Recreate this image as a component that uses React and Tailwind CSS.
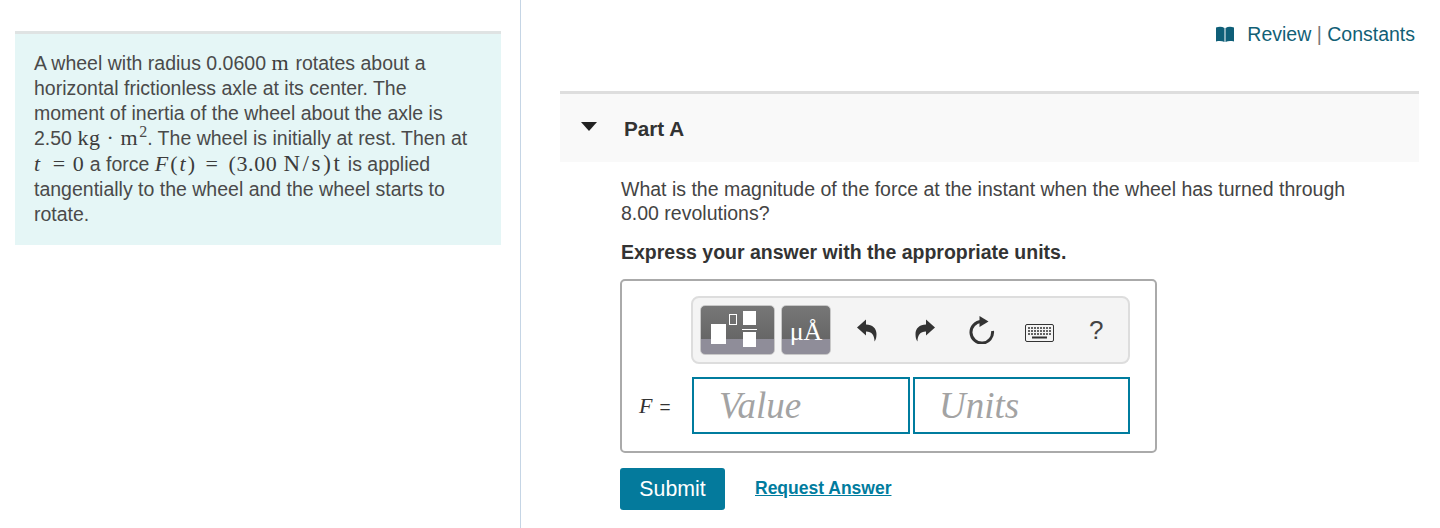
const M = ({ children, i, className = "" }) => (
  <span className={`font-['Liberation_Serif',serif] text-[22px] leading-[0] tracking-[0.6px] text-[#3c3c3c] ${i ? "italic" : ""} ${className}`}>{children}</span>
);

const Undo = ({ flip }) => (
  <svg width="20" height="23" viewBox="0 0 20 23" className={flip ? "-scale-x-100" : ""}>
    <path d="M0 8.500 L9 0.500 V5.500 C15.500 5.500 19.500 9.500 19.500 15 C19.500 18 19 20.500 17.500 22.500 C17.500 16.500 15 12.500 9 12.500 V16.500 Z" fill="#333" />
  </svg>
);

export default function App() {
  return (
    <div className="flex h-[528px] w-[1440px] overflow-hidden bg-white font-['Liberation_Sans',sans-serif] text-[19.5px] text-[#4a4a4a]">
      <div className="h-full w-[521px] shrink-0 border-r border-[#c5d5e5] pl-[15px] pr-[19px] pt-[31px]">
        <div className="h-[214px] border-t-[3px] border-[#dfe3e3] bg-[#e5f6f6] pb-[18px] pl-[19px] pr-[20px] pt-[17px] leading-[25.15px]">
          <p>
            A wheel with radius 0.0600 <M className="tracking-[1.5px]">m</M> rotates about a<br />
            horizontal frictionless axle at its center. The<br />
            moment of inertia of the wheel about the axle is<br />
            2.50 <M>kg</M><M className="mx-[6px]">·</M><M className="tracking-[1.5px]">m</M><sup className="text-[16px] leading-[0] font-['Liberation_Serif',serif]">2</sup>. The wheel is initially at rest. Then at<br />
            <M i>t</M><M className="ml-[12px]">=</M><M className="ml-[7px]">0</M> a force <M i className="tracking-[2px]">F</M><M className="tracking-[2px]">(</M><M i className="tracking-[2px]">t</M><M className="tracking-[1.5px]">)</M><M className="ml-[9px]">=</M><M className="ml-[10px]">(3.00</M><M className="ml-[6px] text-[23px] tracking-[2.6px]">N/s)t</M> is applied<br />
            tangentially to the wheel and the wheel starts to<br />
            rotate.
          </p>
        </div>
      </div>

      <div className="flex-1 pl-[39px] pr-[21px]">
        <div className="flex h-[91px] items-start justify-end pr-1 pt-[20px] text-[#125f76]">
          <svg width="18" height="16" viewBox="0 0 18 16" className="mr-[13px] mt-[6px]">
            <path d="M0 1.500 C3 0.500 6 0.500 8.500 2 V16 C6 14.800 3 14.800 0 15.500 Z M18 1.500 C15 0.500 12 0.500 9.500 2 V16 C12 14.800 15 14.800 18 15.500 Z" fill="#0f5f78" />
          </svg>
          <span>Review <span className="text-[#777]">|</span> Constants</span>
        </div>

        <div className="flex h-[71px] items-center border-t-[3px] border-[#dedede] bg-[#f9f9f9] pl-[21px]">
          <svg width="16" height="9" viewBox="0 0 16 9" className="mt-[-3px]">
            <path d="M0 0 H16 L8 9 Z" fill="#222" />
          </svg>
          <span className="ml-[27px] mt-[2px] text-[20.7px] font-bold text-[#333]">Part A</span>
        </div>

        <div className="pl-[61px] pt-[15px]">
          <p className="w-[760px] leading-[24px] text-[#444]">
            What is the magnitude of the force at the instant when the wheel has turned through 8.00 revolutions?
          </p>
          <p className="mt-[15px] font-bold leading-[24px] text-[#333]">Express your answer with the appropriate units.</p>

          <div className="ml-[-1px] mt-[15px] h-[174px] w-[537px] rounded-[5px] border-2 border-[#aaa] pl-[69px] pr-[25px] pt-[15px]">
            <div className="flex h-[68px] w-[439px] items-center rounded-[8px] border-2 border-[#ddd] bg-[#f4f4f4] pl-[7px]">
              <div className="relative h-[50px] w-[75px] shrink-0 overflow-hidden rounded-[5px] border border-[#c8c8c8] bg-[linear-gradient(#777_0,#666_33px,#8f8d99_33px)]">
                <div className="absolute left-[10px] top-[18px] h-[20px] w-[15px] bg-white" />
                <div className="absolute left-[28px] top-[8px] h-[11px] w-[8px] border border-white" />
                <div className="absolute left-[42px] top-[5px] h-[14px] w-[13px] bg-white" />
                <div className="absolute left-[41px] top-[23px] h-[1px] w-[15px] bg-white" />
                <div className="absolute left-[42px] top-[26px] h-[15px] w-[13px] bg-white" />
              </div>
              <div className="relative ml-[6px] flex h-[50px] w-[50px] shrink-0 items-end justify-center overflow-hidden rounded-[5px] border border-[#c8c8c8] bg-[linear-gradient(#777_0,#666_33px,#8f8d99_33px)] pb-[9px] font-['Liberation_Serif',serif] text-[26px] leading-[26px] text-white">
                μÅ
              </div>
              <div className="ml-[26px] flex h-[24px] w-[20px] shrink-0 items-center"><Undo /></div>
              <div className="ml-[38px] flex h-[24px] w-[20px] shrink-0 items-center"><Undo flip /></div>
              <svg width="27" height="28" viewBox="0 0 27 28" className="ml-[33px] shrink-0">
                <path d="M13.500 5.500 A10.800 10.800 0 1 0 24.500 15" fill="none" stroke="#333" strokeWidth="3" />
                <path d="M11.500 0 L20.500 5.500 L11.500 11 Z" fill="#333" />
              </svg>
              <svg width="29" height="18" viewBox="0 0 29 18" className="ml-[30px] mt-[5px] shrink-0">
                <rect x="0.500" y="0.500" width="28" height="17" rx="1.500" fill="#f4f4f4" stroke="#333" />
                <path d="M3 4 H26 M3 7 H26 M3 10 H26" stroke="#333" strokeWidth="1.500" strokeDasharray="2 1" />
                <path d="M7 13.500 H22" stroke="#333" strokeWidth="2" />
              </svg>
              <span className="ml-[35px] text-[26px] leading-none text-[#444]">?</span>
            </div>

            <div className="ml-[-53px] mt-[13px] flex items-center">
              <span className="w-[54px] shrink-0 pl-[1px] text-[18px] text-[#333]"><span className="font-['Liberation_Serif',serif] text-[22px] italic">F</span><span className="ml-[7px] text-[19px]">=</span></span>
              <div className="flex h-[57px] w-[218px] items-center border-2 border-[#007c9e] pl-[25px] font-['Liberation_Serif',serif] text-[37px] italic text-[#a3a3a3]">Value</div>
              <div className="ml-[3px] flex h-[57px] w-[217px] items-center border-2 border-[#007c9e] pl-[24px] font-['Liberation_Serif',serif] text-[37px] italic text-[#a3a3a3]">Units</div>
            </div>
          </div>

          <div className="ml-[-1px] mt-[15px] flex items-center">
            <button className="h-[42px] w-[105px] rounded-[3px] bg-[#047a9c] pt-[2px] text-[21.300px] text-white">Submit</button>
            <a className="ml-[30px] mt-[-2px] text-[17.500px] font-bold text-[#007c9e] underline">Request Answer</a>
          </div>
        </div>
      </div>
    </div>
  );
}
